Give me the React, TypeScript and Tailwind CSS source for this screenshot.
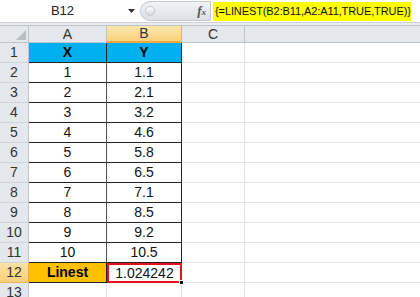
import React from 'react';

const rows: [number, number][] = [
  [1, 1.1],
  [2, 2.1],
  [3, 3.2],
  [4, 4.6],
  [5, 5.8],
  [6, 6.5],
  [7, 7.1],
  [8, 8.5],
  [9, 9.2],
  [10, 10.5],
];

const font = { fontFamily: '"Liberation Sans", Arial, sans-serif' };

function RowHead({ n, selected }: { n: number; selected?: boolean }) {
  return (
    <div
      className={
        'w-[29px] h-full flex items-center justify-center text-[14px] text-[#333] border-r border-b ' +
        (selected
          ? 'bg-gradient-to-b from-[#fbe3a4] to-[#f6cf78] border-r-[#f0a93a] border-b-[#e6b860]'
          : 'bg-[#e4e7eb] border-r-[#bcc3cc] border-b-[#cfd4da]')
      }
    >
      {n}
    </div>
  );
}

export default function App() {
  return (
    <div className="w-[420px] h-[297px] overflow-hidden bg-white" style={font}>
      {/* formula bar */}
      <div className="flex items-center h-[22px] bg-white">
        <div className="w-[125px] text-center text-[13px] text-[#222]">B12</div>
        <div className="w-[12px] flex items-center justify-center">
          <svg width="7" height="4" viewBox="0 0 7 4">
            <path d="M0 0h7L3.5 4z" fill="#333" />
          </svg>
        </div>
        <div className="ml-[3px] h-[20px] w-[71px] rounded-l-full bg-gradient-to-b from-[#f1f3f5] to-[#dde1e6] border border-[#c3c8ce] flex items-center">
          <div className="ml-[4px] w-[10px] h-[10px] rounded-full bg-gradient-to-b from-[#ffffff] to-[#d3d7dc] border border-[#c4c8cd]" />
          <span
            className="ml-auto mr-[4px] text-[13px] italic font-bold text-[#555]"
            style={{ fontFamily: '"Liberation Serif", serif' }}
          >
            f<span className="text-[9px]">x</span>
          </span>
        </div>
        <div className="ml-[2px] h-[19px] w-[198px] bg-[#ffff00] flex items-center pl-[2px] text-[11px] text-[#111] tracking-[-0.1px] whitespace-nowrap">
          {'{=LINEST(B2:B11,A2:A11,TRUE,TRUE)}'}
        </div>
        <div className="flex-1" />
      </div>
      <div className="h-[3px] bg-[#e9ecf0] border-t border-[#cdd2d8]" />

      {/* column headers */}
      <div className="flex h-[18px] border-t border-[#bcc3cc]">
        <div className="w-[29px] h-full bg-[#e4e7eb] border-r border-b border-[#bcc3cc] flex items-end justify-end p-[2px]">
          <svg width="10" height="10" viewBox="0 0 10 10">
            <path d="M10 0V10H0z" fill="#b9bec5" />
          </svg>
        </div>
        <div className="w-[78px] h-full bg-[#e4e7eb] border-r border-b border-[#bcc3cc] flex items-center justify-center text-[14px] text-[#333]">
          A
        </div>
        <div className="w-[75px] h-full bg-gradient-to-b from-[#fbe6ad] to-[#f7d27c] border-r border-[#e2b35a] border-b-2 border-b-[#f0a93a] flex items-center justify-center text-[14px] text-[#333]">
          B
        </div>
        <div className="w-[63px] h-full bg-[#e4e7eb] border-r border-b border-[#bcc3cc] flex items-center justify-center text-[14px] text-[#333]">
          C
        </div>
        <div className="flex-1 h-full bg-[#e4e7eb] border-b border-[#bcc3cc]" />
      </div>

      {/* row 1 */}
      <div className="flex h-[20px]">
        <RowHead n={1} />
        <div className="w-[78px] h-full bg-[#00b0f0] border-r border-b border-[#222] flex items-center justify-center text-[14px] font-bold text-black">
          X
        </div>
        <div className="w-[75px] h-full bg-[#00b0f0] border-r border-b border-[#222] flex items-center justify-center text-[14px] font-bold text-black">
          Y
        </div>
        <div className="w-[63px] h-full border-r border-b border-[#e1e4e8]" />
        <div className="flex-1 h-full border-b border-[#e1e4e8]" />
      </div>

      {rows.map(([x, y], i) => (
        <div key={i} className="flex h-[20px]">
          <RowHead n={i + 2} />
          <div className="w-[78px] h-full border-r border-r-[#555] border-b border-b-[#222] flex items-center justify-center text-[14px] text-[#111]">
            {x}
          </div>
          <div className="w-[75px] h-full border-r border-b border-[#222] flex items-center justify-center text-[14px] text-[#111]">
            {y}
          </div>
          <div className="w-[63px] h-full border-r border-b border-[#e1e4e8]" />
          <div className="flex-1 h-full border-b border-[#e1e4e8]" />
        </div>
      ))}

      {/* row 12 */}
      <div className="flex h-[20px]">
        <RowHead n={12} selected />
        <div className="w-[78px] h-full bg-[#ffc000] border-r border-b border-[#222] flex items-center justify-center text-[14px] font-bold text-black">
          Linest
        </div>
        <div className="relative w-[75px] h-full border-2 border-[#e8101a] flex items-center justify-center text-[14px] text-[#111]">
          1.024242
          <div className="absolute -right-[4px] -bottom-[4px] w-[5px] h-[5px] bg-black border border-white" />
        </div>
        <div className="w-[63px] h-full border-r border-b border-[#e1e4e8]" />
        <div className="flex-1 h-full border-b border-[#e1e4e8]" />
      </div>

      <div className="flex h-[20px]">
        <RowHead n={13} />
        <div className="w-[78px] h-full border-r border-b border-[#e1e4e8]" />
        <div className="w-[75px] h-full border-r border-b border-[#e1e4e8]" />
        <div className="w-[63px] h-full border-r border-b border-[#e1e4e8]" />
        <div className="flex-1 h-full border-b border-[#e1e4e8]" />
      </div>
    </div>
  );
}
